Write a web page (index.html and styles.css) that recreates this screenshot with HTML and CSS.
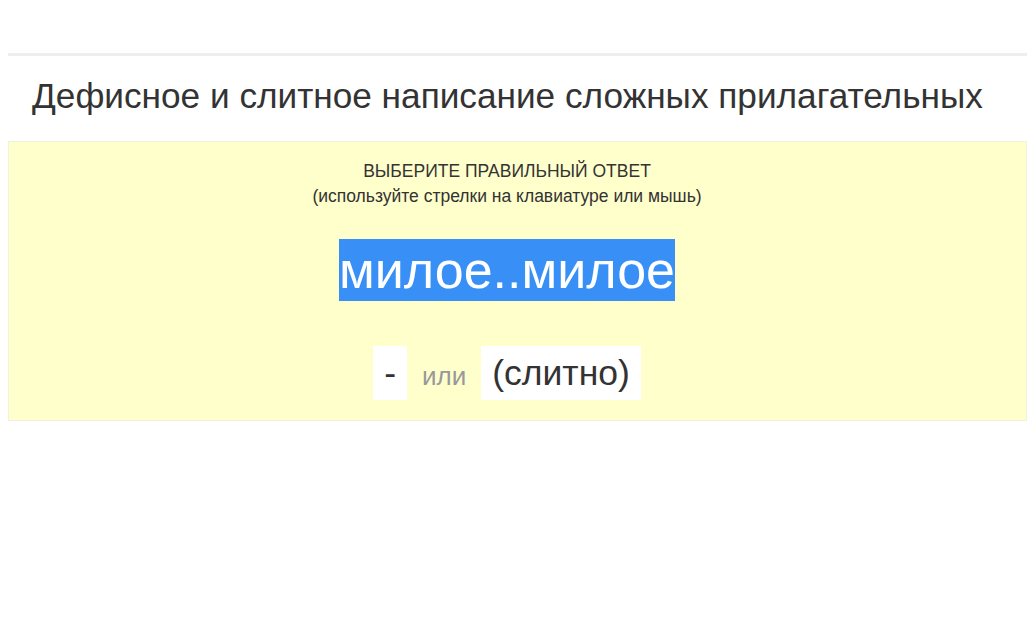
FILE: index.html
```html
<!DOCTYPE html>
<html lang="ru">
<head>
    <meta charset="UTF-8">
    <title>Дефисное и слитное написание сложных прилагательных</title>
    <link rel="stylesheet" href="styles.css">
</head>
<body>
    <hr class="top-line">

    <h2 class="task-title">Дефисное и слитное написание сложных прилагательных</h2>

    <div class="quiz">
        <div class="hint">
            ВЫБЕРИТЕ ПРАВИЛЬНЫЙ ОТВЕТ<br>
            (используйте стрелки на клавиатуре или мышь)
        </div>

        <div class="word-row">
            <span class="word">милое..милое</span>
        </div>

        <div class="answers">
            <span class="answer">-</span>
            <span class="or">или</span>
            <span class="answer">(слитно)</span>
        </div>
    </div>
</body>
</html>
```

FILE: styles.css
```css
body {
    margin: 8px;
    font-family: "Liberation Sans", Arial, sans-serif;
    color: #333;
    background: #fff;
}

.top-line {
    margin: 45px -8px 0 0;
    border: 0;
    border-top: 3px solid #eee;
    height: 0;
}

.task-title {
    margin: 0;
    padding: 20px 0 25px 24px;
    font-size: 35.2px;
    font-weight: normal;
    line-height: 40px;
    color: #333;
}

.quiz {
    background: #ffffcc;
    border: 1px solid #f1f1e0;
    text-align: center;
    padding: 17px 21px 20px 0;
}

.hint {
    font-size: 17.5px;
    line-height: 25px;
    color: #333;
}

.word-row {
    margin-top: 30px;
    line-height: 0;
}

.word {
    display: inline-block;
    background: #3890f6;
    color: #fff;
    font-size: 52px;
    line-height: 62px;
}

.answers {
    margin-top: 45px;
    display: flex;
    justify-content: center;
    align-items: baseline;
    gap: 15px;
}

.answer {
    background: #fff;
    font-size: 35.5px;
    line-height: 54px;
    padding: 0 11px;
    color: #333;
}

.or {
    font-size: 26px;
    color: #999;
}
```
